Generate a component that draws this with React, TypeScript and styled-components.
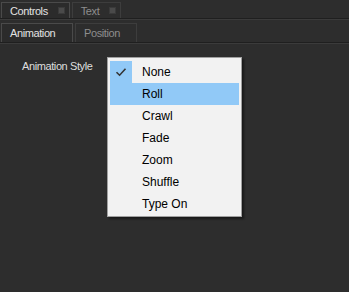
import styled, { createGlobalStyle } from 'styled-components';

const GlobalStyle = createGlobalStyle`
  html, body {
    margin: 0;
    padding: 0;
    background: #2d2d2d;
  }
  body {
    font-family: "Liberation Sans", Arial, sans-serif;
  }
`;

const panelTabs = [
  { label: 'Controls', active: true },
  { label: 'Text', active: false },
];

const subTabs = [
  { label: 'Animation', active: true },
  { label: 'Position', active: false },
];

const styles = ['None', 'Roll', 'Crawl', 'Fade', 'Zoom', 'Shuffle', 'Type On'];
const selected = 'None';
const hovered = 'Roll';

const App = () => {
  return (
    <>
      <GlobalStyle />
      <Page>
        <PanelBar>
          {panelTabs.map((tab) => (
            <PanelTab key={tab.label} $active={tab.active}>
              <TabLabel $active={tab.active}>{tab.label}</TabLabel>
              <DockBox />
            </PanelTab>
          ))}
        </PanelBar>
        <SubBar>
          {subTabs.map((tab) => (
            <SubTab key={tab.label} $active={tab.active}>
              <TabLabel $active={tab.active}>{tab.label}</TabLabel>
            </SubTab>
          ))}
        </SubBar>
        <Content>
          <FieldLabel>Animation Style</FieldLabel>
        </Content>
        <Menu>
          {styles.map((name) => (
            <MenuItem key={name} $hover={name === hovered}>
              <CheckCell $checked={name === selected}>
                {name === selected && (
                  <svg width="12" height="10" viewBox="0 0 12 10">
                    <path d="M1.5 5.2 L4.6 8.2 L10.5 1.8" fill="none" stroke="#333" strokeWidth="1.6" />
                  </svg>
                )}
              </CheckCell>
              <ItemText>{name}</ItemText>
            </MenuItem>
          ))}
        </Menu>
      </Page>
    </>
  );
};

export default App;

const Page = styled.div`
  position: relative;
  width: 349px;
  height: 292px;
  background: #2d2d2d;
  overflow: hidden;
`;

const PanelBar = styled.div`
  display: flex;
  align-items: flex-end;
  column-gap: 2px;
  height: 19px;
  box-sizing: border-box;
  padding-left: 1px;
  border-bottom: 1px solid #1f1f1f;
  box-shadow: 0 1px 0 #3b3b3b;
`;

const PanelTab = styled.div<{ $active: boolean }>`
  display: flex;
  align-items: center;
  column-gap: 10px;
  height: 16px;
  box-sizing: border-box;
  padding: 0 4px 0 8px;
  border: 1px solid ${({ $active }) => ($active ? '#4a4a4a' : '#3d3d3d')};
  border-bottom: none;
  background: ${({ $active }) => ($active ? '#2b2b2b' : '#2d2d2d')};
`;

const TabLabel = styled.span<{ $active: boolean }>`
  font-size: 11px;
  letter-spacing: -0.4px;
  line-height: 14px;
  color: ${({ $active }) => ($active ? '#e2e2e2' : '#8e8e8e')};
`;

const DockBox = styled.span`
  width: 5px;
  height: 5px;
  background: #4a4a4a;
  border: 1px solid #3a3a3a;
`;

const SubBar = styled.div`
  display: flex;
  align-items: flex-end;
  column-gap: 2px;
  height: 24px;
  box-sizing: border-box;
  padding: 0 0 0 1px;
  border-bottom: 1px solid #1f1f1f;
  box-shadow: 0 1px 0 #3b3b3b;
`;

const SubTab = styled.div<{ $active: boolean }>`
  display: flex;
  align-items: center;
  height: 19px;
  box-sizing: border-box;
  padding: 0 0 0 8px;
  width: ${({ $active }) => ($active ? '72px' : '62px')};
  border: 1px solid ${({ $active }) => ($active ? '#4a4a4a' : '#3d3d3d')};
  border-bottom: none;
  background: ${({ $active }) => ($active ? '#2b2b2b' : '#2d2d2d')};
`;

const Content = styled.div`
  padding: 16px 0 0 22px;
`;

const FieldLabel = styled.div`
  font-size: 11px;
  letter-spacing: -0.4px;
  line-height: 14px;
  color: #dedede;
`;

const Menu = styled.div`
  position: absolute;
  left: 107px;
  top: 57px;
  width: 135px;
  height: 160px;
  box-sizing: border-box;
  padding: 3px 2px 0;
  background: #f2f2f2;
  border: 1px solid #a0a0a0;
  box-shadow: 2px 2px 2px rgba(0, 0, 0, 0.45);
`;

const MenuItem = styled.div<{ $hover: boolean }>`
  display: flex;
  align-items: center;
  height: 22px;
  background: ${({ $hover }) => ($hover ? '#91c9f7' : 'transparent')};
`;

const CheckCell = styled.span<{ $checked: boolean }>`
  display: flex;
  align-items: center;
  justify-content: center;
  width: 22px;
  height: 22px;
  background: ${({ $checked }) => ($checked ? '#91c9f7' : 'transparent')};
`;

const ItemText = styled.span`
  margin-left: 10px;
  font-size: 12px;
  color: #000;
`;
